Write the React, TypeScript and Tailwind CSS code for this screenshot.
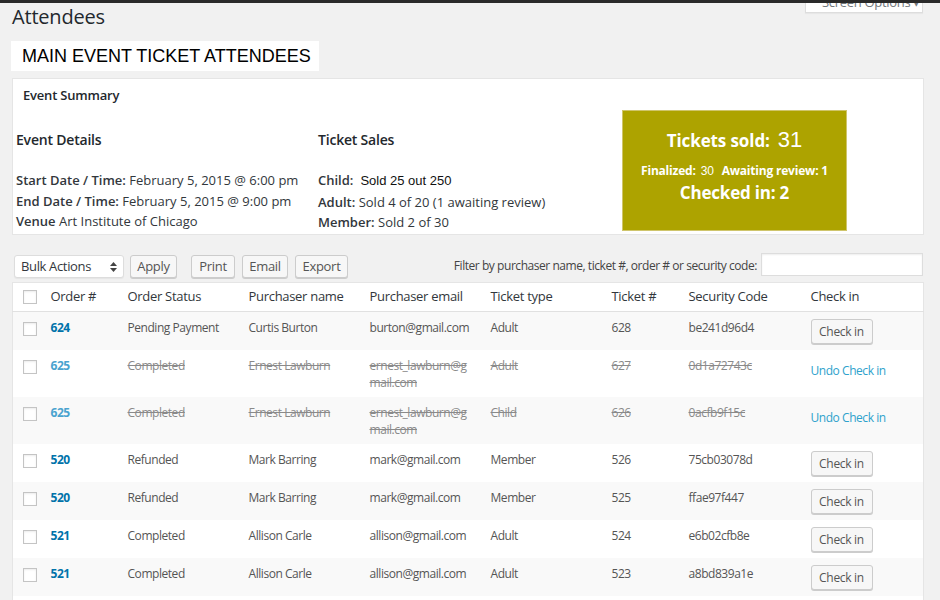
import React from "react";

type Row = {
  order: string;
  status: string;
  name: string;
  email: string;
  type: string;
  ticket: string;
  code: string;
  checked?: boolean;
};

const rows: Row[] = [
  { order: "624", status: "Pending Payment", name: "Curtis Burton", email: "burton@gmail.com", type: "Adult", ticket: "628", code: "be241d96d4" },
  { order: "625", status: "Completed", name: "Ernest Lawburn", email: "ernest_lawburn@gmail.com", type: "Adult", ticket: "627", code: "0d1a72743c", checked: true },
  { order: "625", status: "Completed", name: "Ernest Lawburn", email: "ernest_lawburn@gmail.com", type: "Child", ticket: "626", code: "0acfb9f15c", checked: true },
  { order: "520", status: "Refunded", name: "Mark Barring", email: "mark@gmail.com", type: "Member", ticket: "526", code: "75cb03078d" },
  { order: "520", status: "Refunded", name: "Mark Barring", email: "mark@gmail.com", type: "Member", ticket: "525", code: "ffae97f447" },
  { order: "521", status: "Completed", name: "Allison Carle", email: "allison@gmail.com", type: "Adult", ticket: "524", code: "e6b02cfb8e" },
  { order: "521", status: "Completed", name: "Allison Carle", email: "allison@gmail.com", type: "Adult", ticket: "523", code: "a8bd839a1e" },
  { order: "522", status: "Completed", name: "Allison Carle", email: "allison@gmail.com", type: "Adult", ticket: "522", code: "c1d2e3f4a5" },
];

const sans = { fontFamily: '"Open Sans", "Noto Sans", sans-serif' };
const helv = { fontFamily: '"Liberation Sans", Arial, sans-serif' };

function Checkbox() {
  return <span className="block h-[14px] w-[14px] border border-[#c4c4c4] bg-white shadow-[inset_0_1px_2px_rgba(0,0,0,0.08)]" />;
}

function WpButton({ children, className = "" }: { children: React.ReactNode; className?: string }) {
  return (
    <button
      type="button"
      className={`flex items-center justify-center rounded-[3px] border border-[#cccccc] bg-[#f7f7f7] text-[#555] shadow-[0_1px_0_#ccc] ${className}`}
    >
      {children}
    </button>
  );
}

const cell = "pl-[10px] pt-[7px] pb-[6px] align-top text-[12px] leading-[17px] tracking-[-0.45px]";

export default function App() {
  return (
    <div className="relative h-[600px] w-[940px] overflow-hidden bg-[#f1f1f1] text-[#444]" style={sans}>
      <div className="h-[3px] bg-[#2a2a2a]" />

      <div className="absolute left-[805px] top-[3px] h-[10px] w-[118px] overflow-hidden border border-t-0 border-[#dddddd] bg-white shadow-[0_1px_1px_rgba(0,0,0,0.04)]">
        <span className="absolute left-[16px] top-[-10px] text-[13px] tracking-[-0.3px] text-[#72777c]">Screen Options ▾</span>
      </div>

      <h1 className="pl-[12px] text-[20px] leading-[28px] tracking-[-0.2px] text-[#23282d]">Attendees</h1>

      <div className="ml-[11px] mt-[10px] inline-block bg-white pl-[11px] pr-[8px] text-[18px] leading-[30px] text-black" style={helv}>
        MAIN EVENT TICKET ATTENDEES
      </div>

      <section className="ml-[12px] mt-[7px] h-[157px] w-[912px] border border-[#e5e5e5] bg-white">
        <div className="px-[10px] pt-[7px] text-[13px] font-semibold leading-[18px] tracking-[-0.2px] text-[#23282d]">Event Summary</div>
        <div className="flex">
          <div className="w-[302px] pl-[3px] pt-[26px]">
            <div className="text-[14px] font-semibold leading-[20px] tracking-[-0.2px] text-[#23282d]">Event Details</div>
            <div className="mt-[20px] text-[13px] leading-[20.5px] text-[#32373c]">
              <div><b className="font-semibold">Start Date / Time:</b> February 5, 2015 @ 6:00 pm</div>
              <div><b className="font-semibold">End Date / Time:</b> February 5, 2015 @ 9:00 pm</div>
              <div><b className="font-semibold">Venue</b> Art Institute of Chicago</div>
            </div>
          </div>
          <div className="w-[307px] pl-[3px] pt-[26px]">
            <div className="text-[14px] font-semibold leading-[20px] tracking-[-0.2px] text-[#23282d]">Ticket Sales</div>
            <div className="mt-[20px] text-[13px] leading-[20.5px] text-[#32373c]">
              <div>
                <b className="font-semibold">Child:</b>{" "}
                <span className="text-[13px] font-normal text-[#111]" style={helv}>&nbsp;Sold 25 out 250</span>
              </div>
              <div><b className="font-semibold">Adult:</b> Sold 4 of 20 (1 awaiting review)</div>
              <div><b className="font-semibold">Member:</b> Sold 2 of 30</div>
            </div>
          </div>
          <div className="mt-[6px] flex h-[121px] w-[225px] flex-col items-center border border-[#cfc56c] bg-[#ada300] pt-[16px] text-white">
            <div className="flex items-baseline gap-[8px]">
              <span className="text-[17px] font-bold leading-[26px] tracking-[-0.1px]">Tickets sold:</span>
              <span className="text-[22px] leading-[26px]" style={helv}>31</span>
            </div>
            <div className="mt-[9px] flex items-baseline text-[12px] font-bold leading-[16px] tracking-[-0.2px]">
              <span>Finalized:</span>
              <span className="ml-[5px] font-normal" style={helv}>30</span>
              <span className="ml-[8px]">Awaiting review: 1</span>
            </div>
            <div className="mt-[1px] text-[17px] font-bold leading-[26px] tracking-[-0.2px]">Checked in: 2</div>
          </div>
        </div>
      </section>

      <div className="ml-[12px] mr-[17px] mt-[19px] flex items-start">
        <div className="ml-[2px] mt-[1px] flex h-[23px] w-[110px] items-center justify-between rounded-[3px] border border-[#dddddd] bg-white pl-[6px] pr-[6px] text-[13px] tracking-[-0.35px] text-[#32373c] shadow-[0_1px_1px_rgba(0,0,0,0.05)]">
          <span>Bulk Actions</span>
          <svg width="7" height="10" viewBox="0 0 7 10" fill="#444">
            <path d="M3.5 0 L7 4 H0 Z M0 6 H7 L3.5 10 Z" />
          </svg>
        </div>
        <WpButton className="ml-[6px] mt-[1px] h-[23px] w-[47px] text-[13px] tracking-[-0.3px]">Apply</WpButton>
        <WpButton className="ml-[14px] mt-[1px] h-[23px] w-[44px] text-[13px] tracking-[-0.3px]">Print</WpButton>
        <WpButton className="ml-[7px] mt-[1px] h-[23px] w-[46px] text-[13px] tracking-[-0.3px]">Email</WpButton>
        <WpButton className="ml-[7px] mt-[1px] h-[23px] w-[53px] text-[13px] tracking-[-0.3px]">Export</WpButton>
        <div className="flex-1" />
        <span className="mt-[4px] text-[12px] leading-[16px] tracking-[-0.45px] text-[#444]">Filter by purchaser name, ticket #, order # or security code:</span>
        <div className="ml-[4px] mt-[-1px] h-[23px] w-[162px] border border-[#dddddd] bg-white shadow-[inset_0_1px_2px_rgba(0,0,0,0.07)]" />
      </div>

      <table className="mx-[12px] mt-[4px] w-[912px] table-fixed border-collapse border border-[#e5e5e5] bg-white text-left">
        <colgroup>
          <col className="w-[28px]" />
          <col className="w-[77px]" />
          <col className="w-[121px]" />
          <col className="w-[121px]" />
          <col className="w-[121px]" />
          <col className="w-[121px]" />
          <col className="w-[77px]" />
          <col className="w-[122px]" />
          <col />
        </colgroup>
        <thead>
          <tr className="h-[29px] border-b border-[#e1e1e1] text-[13px] tracking-[-0.3px] text-[#32373c]">
            <th className="pl-[10px] align-middle font-normal"><Checkbox /></th>
            {["Order #", "Order Status", "Purchaser name", "Purchaser email", "Ticket type", "Ticket #", "Security Code", "Check in"].map((h) => (
              <th key={h} className="pl-[10px] font-normal">{h}</th>
            ))}
          </tr>
        </thead>
        <tbody>
          {rows.map((r, i) => {
            const strike = r.checked ? "text-[#8a8a8a] line-through" : "text-[#555]";
            return (
              <tr key={i} className={i % 2 === 0 ? "bg-[#f9f9f9]" : "bg-white"}>
                <td className="pl-[10px] pt-[10px] pb-[6px] align-top"><Checkbox /></td>
                <td className={cell}>
                  <span className={`font-bold ${r.checked ? "text-[#4aa3cf]" : "text-[#0073aa]"}`}>{r.order}</span>
                </td>
                <td className={`${cell} ${strike}`}>{r.status}</td>
                <td className={`${cell} ${strike}`}>{r.name}</td>
                <td className={`${cell} pr-[7px] break-all ${strike}`}>{r.email}</td>
                <td className={`${cell} ${strike}`}>{r.type}</td>
                <td className={`${cell} ${strike}`}>{r.ticket}</td>
                <td className={`${cell} ${strike}`}>{r.code}</td>
                <td className="pl-[10px] pt-[7px] pb-[6px] align-top">
                  {r.checked ? (
                    <span className="text-[12px] leading-[17px] tracking-[-0.45px] text-[#2ea2cc]">Undo Check in</span>
                  ) : (
                    <WpButton className="h-[25px] w-[62px] text-[12px] tracking-[-0.3px]">Check in</WpButton>
                  )}
                </td>
              </tr>
            );
          })}
        </tbody>
      </table>
    </div>
  );
}
